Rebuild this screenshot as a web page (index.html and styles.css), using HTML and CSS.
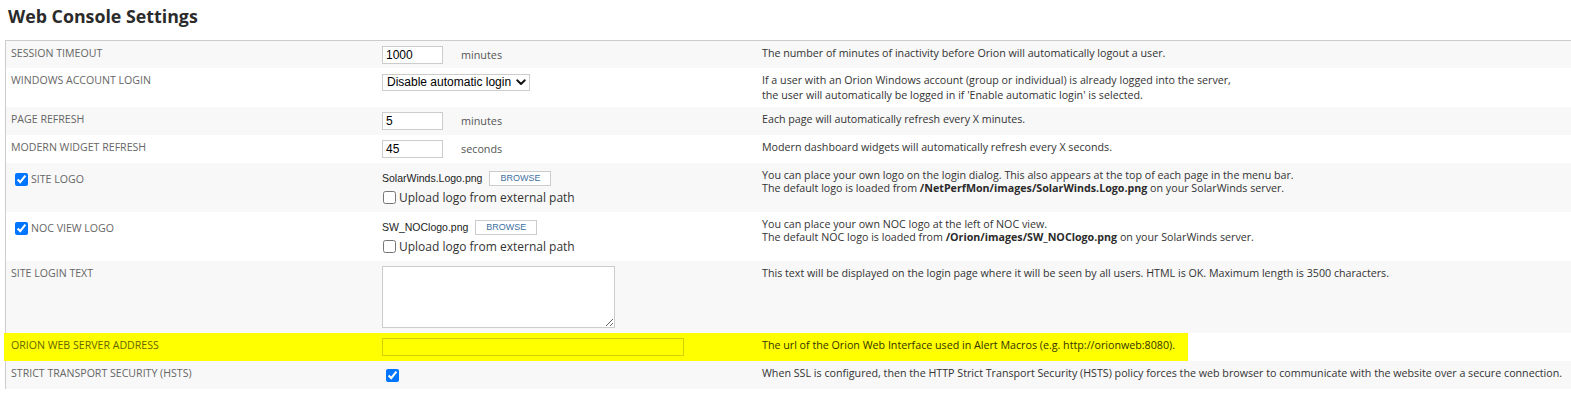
FILE: index.html
```html
<!DOCTYPE html>
<html>
<head>
<meta charset="utf-8">
<title>Web Console Settings</title>
<link rel="stylesheet" href="styles.css">
</head>
<body>
<h1 class="title">Web Console Settings</h1>
<div class="settings">
  <div class="row odd compact">
    <div class="cell label">SESSION TIMEOUT</div>
    <div class="cell control"><input class="num" type="text" value="1000"><span class="unit">minutes</span></div>
    <div class="cell desc">The number of minutes of inactivity before Orion will automatically logout a user.</div>
  </div>
  <div class="row compact">
    <div class="cell label">WINDOWS ACCOUNT LOGIN</div>
    <div class="cell control">
      <div class="sel-wrap">
        <select class="sel"><option>Disable automatic login</option><option>Enable automatic login</option></select>
        <svg class="chev" width="10" height="7" viewBox="0 0 10 7"><path d="M1.2 1.3 L5 5 L8.8 1.3" fill="none" stroke="#111" stroke-width="1.9" stroke-linecap="round" stroke-linejoin="round"/></svg>
      </div>
    </div>
    <div class="cell desc">If a user with an Orion Windows account (group or individual) is already logged into the server,<br>the user will automatically be logged in if 'Enable automatic login' is selected.</div>
  </div>
  <div class="row odd">
    <div class="cell label">PAGE REFRESH</div>
    <div class="cell control"><input class="num" type="text" value="5"><span class="unit">minutes</span></div>
    <div class="cell desc">Each page will automatically refresh every X minutes.</div>
  </div>
  <div class="row">
    <div class="cell label">MODERN WIDGET REFRESH</div>
    <div class="cell control"><input class="num" type="text" value="45"><span class="unit">seconds</span></div>
    <div class="cell desc">Modern dashboard widgets will automatically refresh every X seconds.</div>
  </div>
  <div class="row odd">
    <div class="cell label check-label"><input type="checkbox" class="lcb" checked><span>SITE LOGO</span></div>
    <div class="cell control stack">
      <div class="file-line"><span class="fname">SolarWinds.Logo.png</span><button class="browse">BROWSE</button></div>
      <label class="upload"><input type="checkbox" class="ucb"><span>Upload logo from external path</span></label>
    </div>
    <div class="cell desc tight">You can place your own logo on the login dialog. This also appears at the top of each page in the menu bar.<br>The default logo is loaded from <b>/NetPerfMon/images/SolarWinds.Logo.png</b> on your SolarWinds server.</div>
  </div>
  <div class="row">
    <div class="cell label check-label"><input type="checkbox" class="lcb" checked><span>NOC VIEW LOGO</span></div>
    <div class="cell control stack">
      <div class="file-line"><span class="fname">SW_NOClogo.png</span><button class="browse">BROWSE</button></div>
      <label class="upload"><input type="checkbox" class="ucb"><span>Upload logo from external path</span></label>
    </div>
    <div class="cell desc tight">You can place your own NOC logo at the left of NOC view.<br>The default NOC logo is loaded from <b>/Orion/images/SW_NOClogo.png</b> on your SolarWinds server.</div>
  </div>
  <div class="row odd">
    <div class="cell label">SITE LOGIN TEXT</div>
    <div class="cell control"><textarea class="area"></textarea></div>
    <div class="cell desc">This text will be displayed on the login page where it will be seen by all users. HTML is OK. Maximum length is 3500 characters.</div>
  </div>
  <div class="row marked">
    <div class="cell label">ORION WEB SERVER ADDRESS</div>
    <div class="cell control"><input class="url" type="text" value=""></div>
    <div class="cell desc">The url of the Orion Web Interface used in Alert Macros (e.g. http://orionweb:8080).</div>
  </div>
  <div class="row odd">
    <div class="cell label">STRICT TRANSPORT SECURITY (HSTS)</div>
    <div class="cell control"><input type="checkbox" class="hcb" checked></div>
    <div class="cell desc">When SSL is configured, then the HTTP Strict Transport Security (HSTS) policy forces the web browser to communicate with the website over a secure connection.</div>
  </div>
</div>
</body>
</html>
```
FILE: styles.css
```css
html, body {
  margin: 0;
  padding: 0;
  background: #ffffff;
}

body {
  font-family: "Open Sans", "DejaVu Sans", sans-serif;
  color: #333333;
  overflow: hidden;
}

.title {
  margin: 4px 0 0 8px;
  font-size: 17.8px;
  line-height: 24px;
  font-weight: 700;
  color: #2b2b2b;
}

.settings {
  margin: 12px 0 0 5px;
  border-top: 1px solid #cccccc;
  border-left: 1px solid #cccccc;
}

.row {
  display: grid;
  grid-template-columns: 371px 380px 1fr;
  background: #ffffff;
}

.row.odd {
  background: #f8f8f8;
}

.cell {
  padding: 5px 5px 5px 5px;
  font-size: 10.7px;
  line-height: 15px;
}

.row.compact .cell {
  padding-bottom: 4px;
}

.label {
  color: #666666;
  font-size: 10.6px;
}

.desc {
  color: #333333;
  white-space: nowrap;
}

.desc b {
  font-weight: 700;
  color: #2b2b2b;
}

.desc.tight {
  padding-top: 6px;
  line-height: 13px;
}

.control {
  display: flex;
  align-items: flex-start;
}

.num {
  box-sizing: border-box;
  width: 61px;
  height: 18px;
  margin: 0;
  padding: 0 3px;
  border: 1px solid #cccccc;
  border-radius: 0;
  font-family: "Liberation Sans", Arial, sans-serif;
  font-size: 12px;
  color: #000000;
  background: #ffffff;
  outline: none;
}

.unit {
  margin-left: 18px;
  line-height: 18px;
  font-size: 10.8px;
  color: #555555;
}

.sel-wrap {
  position: relative;
  width: 148px;
  height: 17px;
  margin-top: 1px;
}

.sel {
  box-sizing: border-box;
  width: 148px;
  height: 17px;
  margin: 0;
  padding: 0 0 0 4px;
  border: 1px solid #cccccc;
  border-radius: 0;
  appearance: none;
  -webkit-appearance: none;
  font-family: "Liberation Sans", Arial, sans-serif;
  font-size: 12px;
  line-height: 15px;
  color: #000000;
  background: #ffffff;
}

.chev {
  position: absolute;
  left: 134px;
  top: 5px;
  pointer-events: none;
}

.check-label {
  display: flex;
  align-items: center;
  height: 15px;
  padding-top: 9px;
}

.lcb {
  width: 13px;
  height: 13px;
  margin: 0 3px 0 4px;
}

.stack {
  flex-direction: column;
}

.file-line {
  display: flex;
  align-items: center;
  height: 20px;
}

.fname {
  font-family: "Liberation Sans", Arial, sans-serif;
  font-size: 10.5px;
  color: #222222;
}

.browse {
  box-sizing: border-box;
  width: 62px;
  height: 15px;
  margin: 0 0 0 7px;
  padding: 0;
  border: 1px solid #cccccc;
  border-radius: 0;
  background: #ffffff;
  font-family: "Liberation Sans", Arial, sans-serif;
  font-size: 9px;
  line-height: 13px;
  color: #3b6fa0;
}

.upload {
  display: flex;
  align-items: center;
  height: 19px;
  font-family: "Open Sans", sans-serif;
  font-size: 12px;
  color: #333333;
}

.ucb {
  width: 13px;
  height: 13px;
  margin: 0 3px 0 1px;
}

.area {
  box-sizing: border-box;
  width: 233px;
  height: 62px;
  margin: 0;
  border: 1px solid #cccccc;
  border-radius: 0;
  background: #ffffff;
  resize: both;
}

.url {
  box-sizing: border-box;
  width: 302px;
  height: 18px;
  margin: 0;
  border: 1px solid #d2d200;
  border-radius: 0;
  background: transparent;
  outline: none;
}

.hcb {
  width: 13px;
  height: 13px;
  margin: 3px 3px 2px 4px;
}

.row.marked {
  background: linear-gradient(to right, #ffff00 0, #ffff00 1182px, #ffffff 1182px);
  box-shadow: -2px 0 0 #ffff00;
}

.row.marked .label {
  color: #666600;
}

.row.marked .desc {
  color: #333300;
}
```
